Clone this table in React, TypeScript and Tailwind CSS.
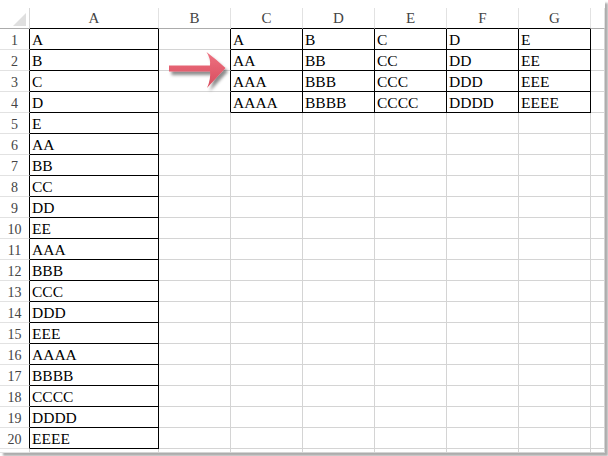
import React from 'react';

const colLetters = ['A', 'B', 'C', 'D', 'E', 'F', 'G', ''];

const colA = [
  'A', 'B', 'C', 'D', 'E',
  'AA', 'BB', 'CC', 'DD', 'EE',
  'AAA', 'BBB', 'CCC', 'DDD', 'EEE',
  'AAAA', 'BBBB', 'CCCC', 'DDDD', 'EEEE',
];

// row 0 = header, rows 1..20 = data, row 21 = partial
// col 0 = row header, 1 = A ... 7 = G, 8 = H
function isBlack(r: number, c: number) {
  if (r >= 1 && r <= 20 && c === 1) return true;
  if (r >= 1 && r <= 4 && c >= 3 && c <= 7) return true;
  return false;
}

function cellText(r: number, c: number) {
  if (r < 1 || r > 20) return '';
  if (c === 1) return colA[r - 1];
  if (r <= 4 && c >= 3 && c <= 7) return colLetters[c - 3].repeat(r);
  return '';
}

function Arrow() {
  return (
    <svg
      className="absolute left-[160px] top-[45px]"
      width="80"
      height="55"
      viewBox="160 45 80 55"
    >
      <defs>
        <linearGradient id="arr" x1="0" y1="0" x2="0" y2="1">
          <stop offset="0" stopColor="#ee7281" />
          <stop offset="1" stopColor="#d84c5d" />
        </linearGradient>
        <filter id="sh" x="-20%" y="-20%" width="150%" height="150%">
          <feDropShadow dx="2.5" dy="3.5" stdDeviation="1.6" floodColor="#000" floodOpacity="0.45" />
        </filter>
      </defs>
      <path
        d="M169 65.5 L210 65.5 Q211 59 206.5 52 Q217 60 225.5 68 Q217 77 207 88 Q211 79 210 71.5 L169 71.5 Z"
        fill="url(#arr)"
        filter="url(#sh)"
      />
    </svg>
  );
}

export default function App() {
  const rows = Array.from({ length: 22 }, (_, i) => i);
  const cols = Array.from({ length: 9 }, (_, i) => i);

  return (
    <div className="w-[608px] h-[456px] bg-white overflow-hidden">
      <div className="relative w-[605px] h-[453px] bg-white shadow-[3px_3px_2px_rgba(0,0,0,0.32)] overflow-hidden pt-[8px]">
        <div className="grid grid-cols-[30px_129px_72px_72px_72px_72px_72px_72px_1fr] grid-rows-[repeat(21,21px)_1fr] h-[445px]">
          {rows.map(r =>
            cols.map(c => {
              const rb = isBlack(r, c) || isBlack(r, c + 1);
              const bb = isBlack(r, c) || isBlack(r + 1, c);

              if (r === 0) {
                // header row
                return (
                  <div
                    key={`${r}-${c}`}
                    className={`relative border-r border-b ${c === 0 ? 'border-r-[#d6d6d6]' : 'border-r-[#e2e2e2]'} ${bb ? 'border-b-black' : 'border-b-[#ababab]'} text-center text-[15px] leading-[20px] text-[#444] font-['Liberation_Serif',serif]`}
                  >
                    {c === 0 ? (
                      <div className="absolute right-[3px] bottom-[2px] w-0 h-0 border-l-[13px] border-l-transparent border-b-[13px] border-b-[#dfdfdf]" />
                    ) : (
                      colLetters[c - 1]
                    )}
                  </div>
                );
              }

              if (c === 0) {
                return (
                  <div
                    key={`${r}-${c}`}
                    className={`border-r border-b ${rb ? 'border-r-black' : 'border-r-[#d6d6d6]'} border-b-[#e2e2e2] text-center text-[14px] leading-[20px] pt-[2px] text-[#444] font-['Liberation_Serif',serif]`}
                  >
                    {r <= 20 ? r : ''}
                  </div>
                );
              }

              return (
                <div
                  key={`${r}-${c}`}
                  className={`border-r border-b ${rb ? 'border-r-black' : 'border-r-[#d4d4d4]'} ${bb ? 'border-b-black' : 'border-b-[#d4d4d4]'} pl-[2px] pt-[1px] text-[15.5px] leading-[20px] text-black whitespace-nowrap overflow-hidden font-['Liberation_Serif',serif]`}
                >
                  {cellText(r, c)}
                </div>
              );
            })
          )}
        </div>
        <Arrow />
      </div>
    </div>
  );
}
